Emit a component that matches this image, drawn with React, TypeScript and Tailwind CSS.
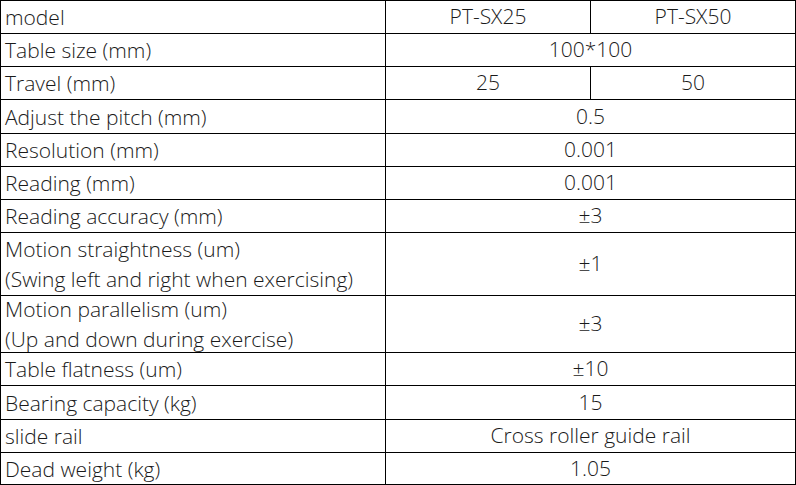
import React from "react";

type Row = { label: string[]; values: string[]; h: string };

const rows: Row[] = [
  { label: ["model"], values: ["PT-SX25", "PT-SX50"], h: "h-[33px]" },
  { label: ["Table size (mm)"], values: ["100*100"], h: "h-[33px]" },
  { label: ["Travel (mm)"], values: ["25", "50"], h: "h-[33px]" },
  { label: ["Adjust the pitch (mm)"], values: ["0.5"], h: "h-[34px]" },
  { label: ["Resolution (mm)"], values: ["0.001"], h: "h-[33px]" },
  { label: ["Reading (mm)"], values: ["0.001"], h: "h-[33px]" },
  { label: ["Reading accuracy (mm)"], values: ["±3"], h: "h-[33px]" },
  {
    label: ["Motion straightness (um)", "(Swing left and right when exercising)"],
    values: ["±1"],
    h: "h-[63px]",
  },
  {
    label: ["Motion parallelism (um)", "(Up and down during exercise)"],
    values: ["±3"],
    h: "h-[57px]",
  },
  { label: ["Table flatness (um)"], values: ["±10"], h: "h-[33px]" },
  { label: ["Bearing capacity (kg)"], values: ["15"], h: "h-[34px]" },
  { label: ["slide rail"], values: ["Cross roller guide rail"], h: "h-[33px]" },
  { label: ["Dead weight (kg)"], values: ["1.05"], h: "h-[32px]" },
];

export default function App() {
  return (
    <div
      className="w-[796px] h-[485px] bg-white text-[#1a1a1a] font-light text-[21px]"
      style={{ fontFamily: '"Open Sans", "Noto Sans", sans-serif' }}
    >
      <div className="w-[796px] border-l border-t border-black">
        {rows.map((r, i) => (
          <div key={i} className={`flex ${r.h}`}>
            <div className="w-[385px] shrink-0 border-r border-b border-black pl-1 flex flex-col justify-center leading-[30px]">
              {r.label.map((l, j) => (
                <div key={j} className="whitespace-nowrap">
                  {l}
                </div>
              ))}
            </div>
            {r.values.length === 2 ? (
              <>
                <div className="w-[205px] shrink-0 border-r border-b border-black flex items-center justify-center">
                  {r.values[0]}
                </div>
                <div className="w-[205px] shrink-0 border-r border-b border-black flex items-center justify-center">
                  {r.values[1]}
                </div>
              </>
            ) : (
              <div className="w-[410px] shrink-0 border-r border-b border-black flex items-center justify-center">
                {r.values[0]}
              </div>
            )}
          </div>
        ))}
      </div>
    </div>
  );
}
